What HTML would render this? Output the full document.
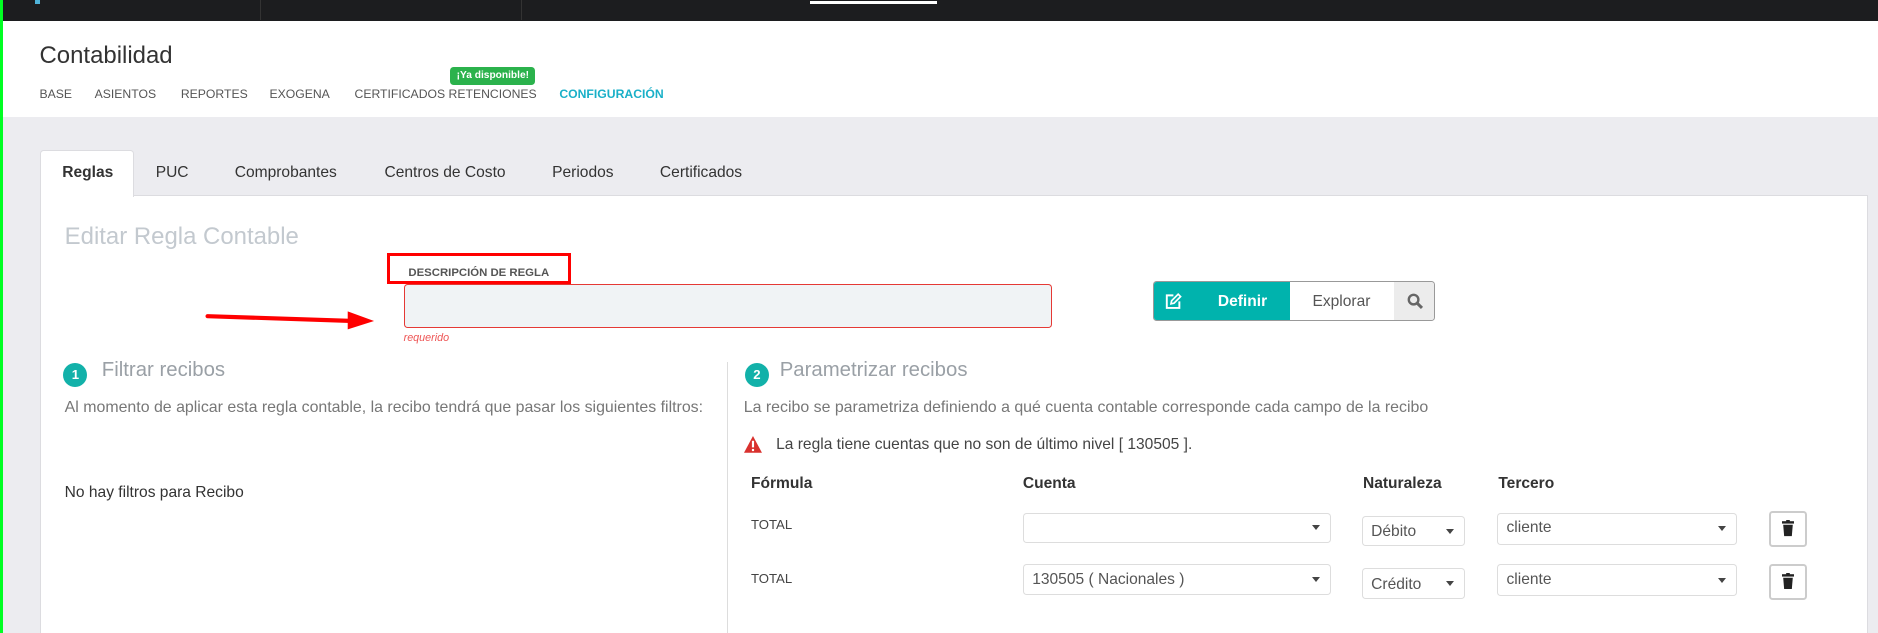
<!DOCTYPE html>
<html><head><meta charset="utf-8"><style>
html,body{margin:0;padding:0;overflow:hidden}
body{width:1878px;height:633px;background:#ececf0;font-family:"Liberation Sans",sans-serif}
#z{zoom:1.19770;width:1568px;height:529px;position:relative;background:#ececf0;overflow:hidden}
.a{position:absolute;white-space:nowrap}
.top{left:0;top:0;width:1568px;height:17.5px;background:#1c1d1f}
.hdr{left:0;top:17.5px;width:1568px;height:80px;background:#fff}
.nav{top:73px;font-size:10.2px;color:#555}
.tab{top:137px;font-size:13px;color:#333}
.panel{left:33px;top:163px;width:1525px;height:380px;background:#fff;border:1px solid #dcdce0}
.circ{width:20px;height:20px;border-radius:50%;background:#12b1a9;color:#fff;font-size:11px;font-weight:bold;text-align:center;line-height:20px}
.sec{font-size:17px;color:#9aa0a6;font-weight:300}
.txt{font-size:13.3px;color:#777}
.th{top:397px;font-size:13px;color:#333;font-weight:bold}
.sel{background:#fff;border:1px solid #ddd;border-radius:3px;font-size:13px;color:#555;box-sizing:border-box;padding-left:7px}
.sel:after{content:"";position:absolute;right:8px;top:50%;margin-top:-2px;border-left:3.5px solid transparent;border-right:3.5px solid transparent;border-top:5px solid #444}
.trash{width:32px;height:30px;border:2px solid #ccc;border-radius:3px;box-sizing:border-box;background:#fff}
</style></head><body><div id="z">
<div class="a top"></div>
<div class="a" style="left:217px;top:0;width:1px;height:17px;background:#333"></div>
<div class="a" style="left:435px;top:0;width:1px;height:17px;background:#333"></div>
<div class="a" style="left:676px;top:1px;width:106px;height:2px;background:#fff"></div>
<div class="a" style="left:29px;top:0;width:4px;height:3px;background:#4fb3d9"></div>
<div class="a hdr"></div>
<div class="a" style="left:0;top:0;width:2.5px;height:529px;background:#00ff22;z-index:5"></div>
<div class="a" style="left:33px;top:35px;font-size:20px;color:#333;font-weight:300">Contabilidad</div>
<div class="a nav" style="left:33px">BASE</div>
<div class="a nav" style="left:79px">ASIENTOS</div>
<div class="a nav" style="left:151px">REPORTES</div>
<div class="a nav" style="left:225px">EXOGENA</div>
<div class="a nav" style="left:296px">CERTIFICADOS RETENCIONES</div>
<div class="a nav" style="left:467px;color:#1ab0c8;font-weight:bold">CONFIGURACIÓN</div>
<div class="a" style="left:376px;top:56px;width:71px;height:15px;background:#2bb24c;border-radius:3px;color:#fff;font-size:8.5px;font-weight:bold;text-align:center;line-height:15px">¡Ya disponible!</div>

<div class="a panel"></div>
<div class="a" style="left:33px;top:125px;width:77px;height:39px;background:#fff;border:1px solid #dcdce0;border-bottom:none;border-radius:3px 3px 0 0"></div>
<div class="a tab" style="left:52px;font-weight:bold">Reglas</div>
<div class="a tab" style="left:130px">PUC</div>
<div class="a tab" style="left:196px">Comprobantes</div>
<div class="a tab" style="left:321px">Centros de Costo</div>
<div class="a tab" style="left:461px">Periodos</div>
<div class="a tab" style="left:551px">Certificados</div>

<div class="a" style="left:54px;top:186px;font-size:20px;color:#c3c9cf;font-weight:300">Editar Regla Contable</div>
<div class="a" style="left:323px;top:211px;width:149px;height:21px;border:3px solid #f00"></div>
<div class="a" style="left:341px;top:223px;font-size:9.5px;color:#555;font-weight:bold">DESCRIPCIÓN DE REGLA</div>
<div class="a" style="left:337px;top:237px;width:541px;height:37px;box-sizing:border-box;background:#f0f3f5;border:1px solid #e53935;border-radius:3px"></div>
<div class="a" style="left:337px;top:277px;font-size:9px;color:#e55;font-style:italic">requerido</div>
<svg class="a" style="left:170px;top:258px" width="150" height="20"><line x1="3" y1="6" x2="125" y2="10" stroke="#f00" stroke-width="3.5" stroke-linecap="round"/><polygon points="120,2 142,10 120,17" fill="#f00"/></svg>

<div class="a" style="left:963px;top:235px;width:235px;height:33px;box-sizing:border-box;border:1px solid #999;border-radius:3px;overflow:hidden;background:#fff">
 <div class="a" style="left:0;top:0;width:113px;height:33px;background:#00b3ad"></div>
 <svg class="a" style="left:9px;top:9px" width="14" height="14" viewBox="0 0 14 14"><path d="M7 2H1.5v10.5H12V7" fill="none" stroke="#fff" stroke-width="1.6"/><path d="M5 9l.5-2.5L11 1l2 2-5.5 5.5z" fill="none" stroke="#fff" stroke-width="1.4"/></svg>
 <div class="a" style="left:53px;top:9px;color:#fff;font-weight:bold;font-size:13px">Definir</div>
 <div class="a" style="left:132px;top:9px;color:#555;font-size:13px">Explorar</div>
 <div class="a" style="left:200px;top:0;width:35px;height:33px;background:#ececec"></div>
 <svg class="a" style="left:211px;top:9px" width="14" height="14"><circle cx="5.5" cy="5.5" r="4" fill="none" stroke="#666" stroke-width="2"/><line x1="8.5" y1="8.5" x2="12.5" y2="12.5" stroke="#666" stroke-width="2.5"/></svg>
</div>

<div class="a circ" style="left:53px;top:303px">1</div>
<div class="a sec" style="left:85px;top:300px">Filtrar recibos</div>
<div class="a txt" style="left:54px;top:333px">Al momento de aplicar esta regla contable, la recibo tendrá que pasar los siguientes filtros:</div>
<div class="a" style="left:54px;top:404px;font-size:13px;color:#333">No hay filtros para Recibo</div>
<div class="a" style="left:607px;top:302px;width:1px;height:230px;background:#ddd"></div>

<div class="a circ" style="left:622px;top:303px">2</div>
<div class="a sec" style="left:651px;top:300px">Parametrizar recibos</div>
<div class="a txt" style="left:621px;top:333px">La recibo se parametriza definiendo a qué cuenta contable corresponde cada campo de la recibo</div>
<svg class="a" style="left:621px;top:364px" width="15" height="14"><polygon points="7.5,0 15,14 0,14" fill="#d9312e"/><rect x="6.6" y="4" width="1.8" height="5.5" fill="#fff"/><rect x="6.6" y="10.8" width="1.8" height="1.8" fill="#fff"/></svg>
<div class="a" style="left:648px;top:364px;font-size:13px;color:#444">La regla tiene cuentas que no son de último nivel [ 130505 ].</div>

<div class="a th" style="left:627px">Fórmula</div>
<div class="a th" style="left:854px">Cuenta</div>
<div class="a th" style="left:1138px">Naturaleza</div>
<div class="a th" style="left:1251px">Tercero</div>

<div class="a" style="left:627px;top:432px;font-size:11px;color:#444">TOTAL</div>
<div class="a sel" style="left:854px;top:428px;width:257px;height:25px"></div>
<div class="a sel" style="left:1137px;top:431px;width:86px;height:25px;line-height:25px">Débito</div>
<div class="a sel" style="left:1250px;top:428px;width:200px;height:27px;line-height:23px">cliente</div>
<div class="a trash" style="left:1477px;top:427px"></div>

<div class="a" style="left:627px;top:477px;font-size:11px;color:#444">TOTAL</div>
<div class="a sel" style="left:854px;top:471px;width:257px;height:26px;line-height:25px">130505 ( Nacionales )</div>
<div class="a sel" style="left:1137px;top:474px;width:86px;height:26px;line-height:26px">Crédito</div>
<div class="a sel" style="left:1250px;top:471px;width:200px;height:27px;line-height:25px">cliente</div>
<div class="a trash" style="left:1477px;top:471px"></div>

<svg class="a" style="left:1488px;top:434px" width="10" height="14"><rect x="0" y="1" width="10" height="2" fill="#222"/><rect x="3.5" y="0" width="3" height="2" fill="#222"/><path d="M1 4h8l-.8 9.5H1.8z" fill="#222"/></svg>
<svg class="a" style="left:1488px;top:478px" width="10" height="14"><rect x="0" y="1" width="10" height="2" fill="#222"/><rect x="3.5" y="0" width="3" height="2" fill="#222"/><path d="M1 4h8l-.8 9.5H1.8z" fill="#222"/></svg>
</div></body></html>
